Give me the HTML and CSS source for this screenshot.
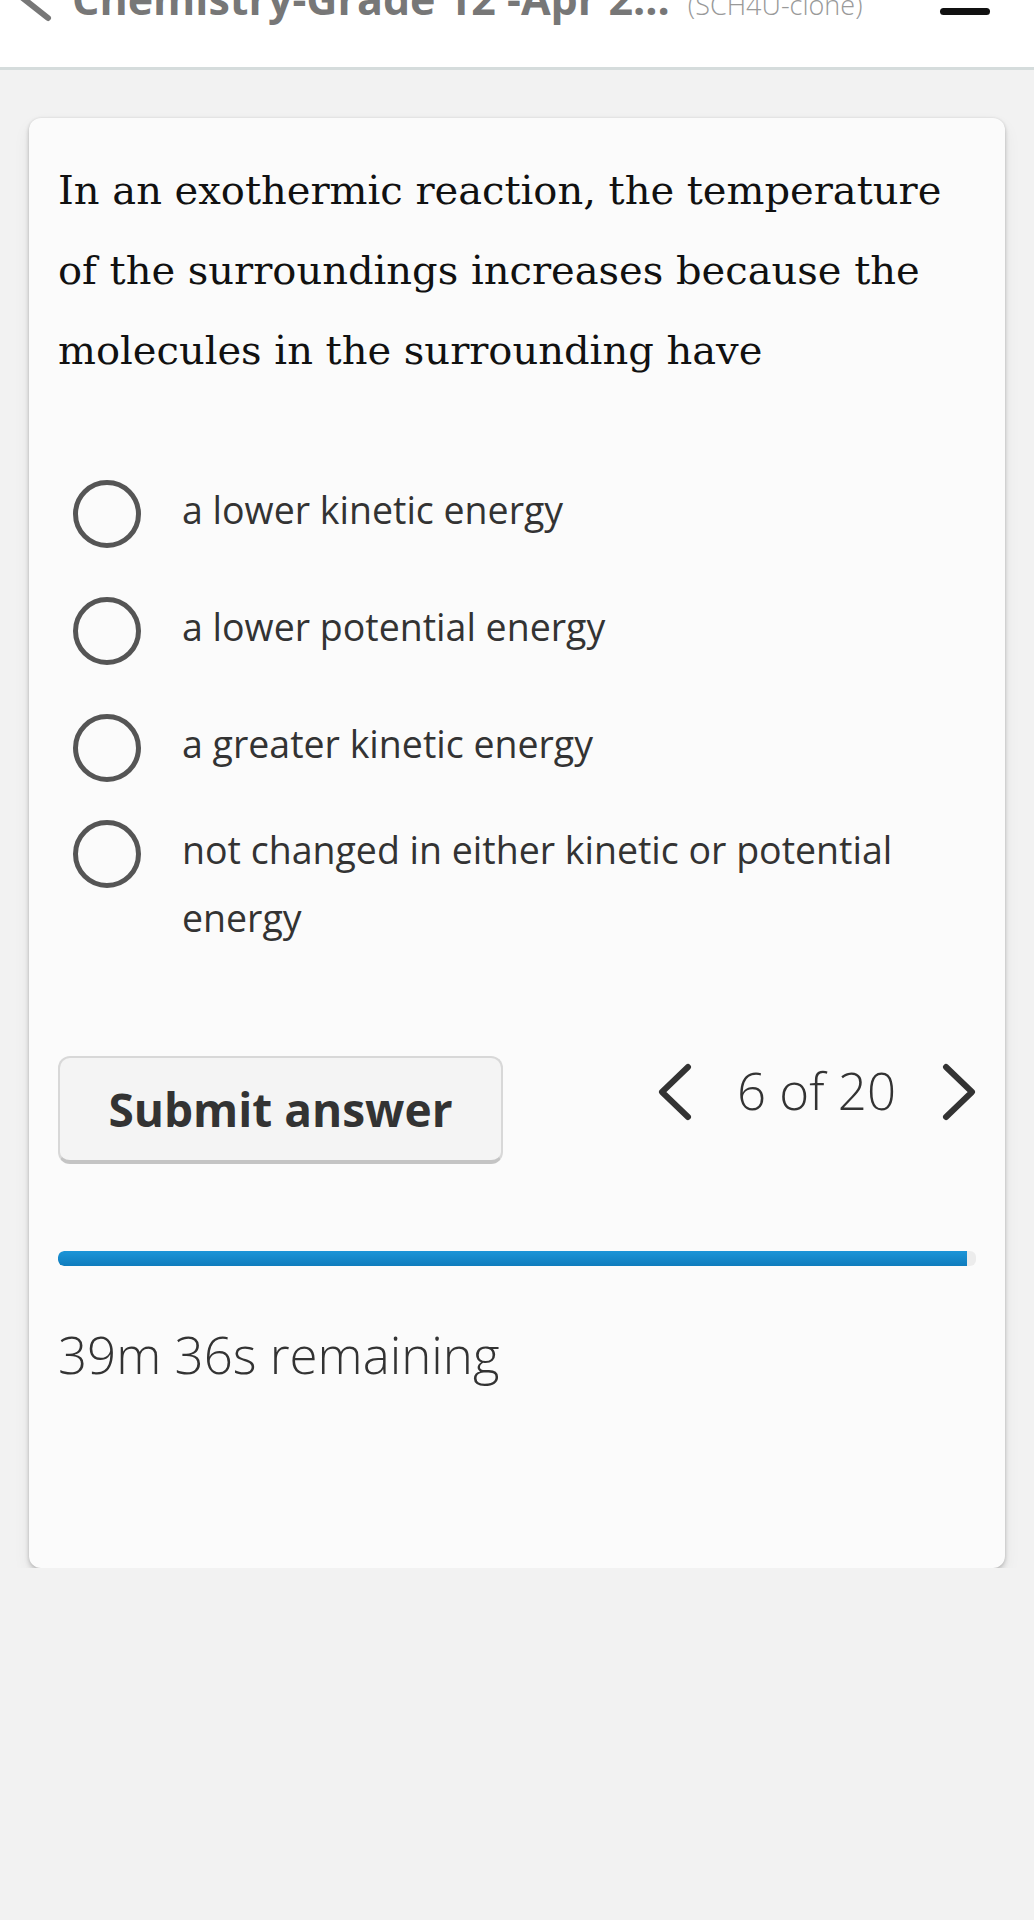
FILE: index.html
```html
<!DOCTYPE html>
<html>
  <head>
    <meta charset="utf-8" />
    <title>Chemistry-Grade 12 - Quiz</title>
    <link rel="stylesheet" href="styles.css">
  </head>
<body>

  <div class="topbar">
    <div class="topbarRow">
      <svg class="backArrow" width="50" height="72" viewBox="0 0 50 72">
        <polyline points="44,6 6,36 44,66" fill="none" stroke="#777" stroke-width="6" stroke-linecap="round" stroke-linejoin="round" />
      </svg>
      <span class="courseTitle">Chemistry-Grade 12 -Apr 2...</span>
      <span class="courseCode">(SCH4U-clone)</span>
      <span class="menuBar"></span>
    </div>
  </div>

  <div class="card">
    <p class="question">
      In an exothermic reaction, the temperature
      of the surroundings increases because the
      molecules in the surrounding have
    </p>

    <div class="options">
      <div class="option">
        <span class="radio"></span>
        <span class="label">a lower kinetic energy</span>
      </div>
      <div class="option">
        <span class="radio"></span>
        <span class="label">a lower potential energy</span>
      </div>
      <div class="option">
        <span class="radio"></span>
        <span class="label">a greater kinetic energy</span>
      </div>
      <div class="option long">
        <span class="radio"></span>
        <span class="label">not changed in either kinetic or potential energy</span>
      </div>
    </div>

    <div class="actions">
      <button class="submitButton">Submit answer</button>
      <div class="pager">
        <svg class="pagerArrow" width="34" height="58" viewBox="0 0 34 58">
          <polyline points="30,4 4,29 30,54" fill="none" stroke="#333" stroke-width="6" stroke-linecap="round" stroke-linejoin="round" />
        </svg>
        <span class="pagerText">6 of 20</span>
        <svg class="pagerArrow" width="34" height="58" viewBox="0 0 34 58">
          <polyline points="4,4 30,29 4,54" fill="none" stroke="#333" stroke-width="6" stroke-linecap="round" stroke-linejoin="round" />
        </svg>
      </div>
    </div>

    <div class="progress">
      <div class="progressFill" style="width: 99%"></div>
    </div>

    <p class="timer">39m 36s remaining</p>
  </div>

</body>
</html>
```

FILE: styles.css
```css
body
{
  margin: 0;
  background-color: #f2f2f2;
  font-family: 'Open Sans', 'Liberation Sans', sans-serif;
  color: #333;
}

/* top bar, scrolled so only its lower part shows */

.topbar
{
  height: 67px;
  overflow: hidden;
  background-color: #fff;
  border-bottom: 3px solid #d5dcdc;
}

.topbarRow
{
  display: flex;
  align-items: baseline;
  margin-top: -23px;
}

.backArrow
{
  align-self: flex-start;
  margin-left: 4px;
  margin-top: -25px;
  flex-shrink: 0;
}

.courseTitle
{
  margin-left: 18px;
  font-size: 43px;
  line-height: 43px;
  font-weight: 700;
  color: #777;
  white-space: nowrap;
}

.courseCode
{
  margin-left: 18px;
  font-size: 27px;
  font-weight: 300;
  color: #999;
  white-space: nowrap;
}

.menuBar
{
  align-self: flex-start;
  margin-left: auto;
  margin-right: 44px;
  margin-top: 31px;
  width: 50px;
  height: 7px;
  border-radius: 4px;
  background-color: #111;
}

/* question card */

.card
{
  margin: 48px 29px 0 29px;
  padding: 32px 29px 180px 29px;
  background-color: #fbfbfb;
  border-radius: 12px;
  box-shadow: 0 0 3px rgba(0, 0, 0, 0.10), 0 3px 5px rgba(0, 0, 0, 0.18), 0 8px 18px rgba(0, 0, 0, 0.06);
}

.question
{
  margin: 0;
  font-family: 'DejaVu Serif', 'Liberation Serif', serif;
  font-size: 40px;
  line-height: 80px;
  color: #111;
}

.options
{
  margin-top: 86px;
}

.option
{
  display: flex;
  align-items: flex-start;
  margin-bottom: 45px;
}

.option.long
{
  margin-top: -11px;
  margin-bottom: 0;
}

.radio
{
  flex-shrink: 0;
  box-sizing: border-box;
  width: 68px;
  height: 68px;
  margin-left: 15px;
  margin-top: 4px;
  border: 5px solid #555;
  border-radius: 50%;
}

.label
{
  margin-left: 41px;
  font-size: 37.5px;
  line-height: 68px;
  color: #333;
}

/* submit and paging */

.actions
{
  display: flex;
  justify-content: space-between;
  align-items: flex-start;
  margin-top: 104px;
}

.submitButton
{
  box-sizing: border-box;
  width: 445px;
  height: 108px;
  padding: 0;
  font-family: 'Open Sans', 'Liberation Sans', sans-serif;
  font-size: 46px;
  font-weight: 700;
  color: #333;
  background-color: #f4f4f4;
  border: 2px solid #d8d8d8;
  border-bottom: 4px solid #c4c4c4;
  border-radius: 12px;
}

.pager
{
  display: flex;
  align-items: flex-start;
  margin-top: 7px;
}

.pagerText
{
  margin: -7px 46px 0 45px;
  font-size: 51px;
  font-weight: 300;
  line-height: 68px;
  color: #333;
}

.progress
{
  margin-top: 87px;
  height: 15px;
  border-radius: 6px;
  background-color: #ececec;
  overflow: hidden;
}

.progressFill
{
  height: 100%;
  border-radius: 6px 0 0 6px;
  background: linear-gradient(#1c95d8, #0f7cbd);
}

.timer
{
  margin: 54px 0 0 0;
  font-size: 51px;
  font-weight: 300;
  line-height: 68px;
  color: #333;
}
```
